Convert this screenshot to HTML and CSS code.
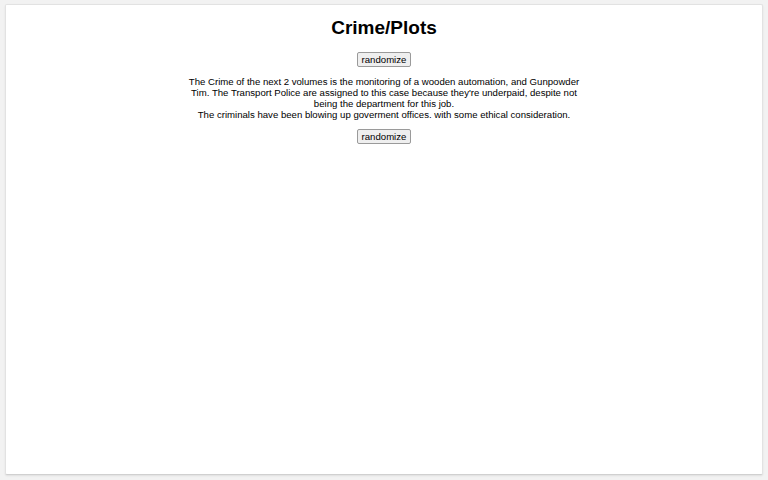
FILE: index.html
```html
<!DOCTYPE html>

<html lang="en">

<head>
    <title>Crime/Plots</title>
    <meta charset="utf-8">
    <meta name="viewport" content="width=device-width, initial-scale=1.0">
    <link rel="stylesheet" href="styles.css">
</head>

<body>
    <main class="card">
        <h1>Crime/Plots</h1>
        <button class="randomize">randomize</button>
        <p class="plot">
            The Crime of the next 2 volumes is the monitoring of a wooden automation, and Gunpowder
            Tim. The Transport Police are assigned to this case because they're underpaid, despite not
            being the department for this job.<br>
            The criminals have been blowing up goverment offices. with some ethical consideration.
        </p>
        <button class="randomize">randomize</button>
    </main>
</body>

</html>
```

FILE: styles.css
```css
html,
body {
    background-color: #f2f2f2;
    color: black;
}

body {
    margin: 0;
    padding: 4px 5px 5px 5px;
    height: 480px;
    box-sizing: border-box;
    font-family: "Liberation Sans", Arial, sans-serif;
}

.card {
    height: 100%;
    box-sizing: border-box;
    background-color: white;
    border: 1px solid #e2e2e2;
    border-bottom-color: #d0d0d0;
    border-radius: 2px;
    box-shadow: 0 1px 2px rgba(0, 0, 0, 0.08);
    text-align: center;
    padding-top: 13px;
}

h1 {
    font-size: 19px;
    margin: 0 0 11px 0;
    line-height: 20px;
}

.randomize {
    font-family: "Liberation Sans", Arial, sans-serif;
    font-size: 9.6px;
    padding: 1px 4px;
    background-color: #efefef;
    border: 1px solid #9a9a9a;
    border-radius: 2px;
    color: black;
}

.plot {
    font-size: 9.6px;
    line-height: 11px;
    max-width: 392px;
    margin: 9px auto 6px auto;
}
```
